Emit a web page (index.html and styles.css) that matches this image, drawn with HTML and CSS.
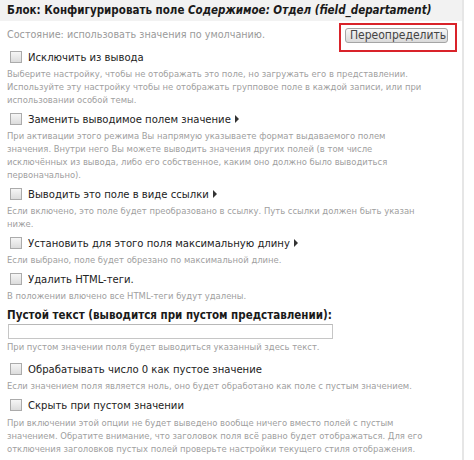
FILE: index.html
```html
<!DOCTYPE html>
<html lang="ru">
<head>
<meta charset="utf-8">
<link rel="stylesheet" href="styles.css">
</head>
<body>
<div class="panel">
  <div class="title">Блок: Конфигурировать поле <em>Содержимое: Отдел (field_departament)</em></div>
  <div class="status-row">
    <span class="status">Состояние: использовать значения по умолчанию.</span>
    <span class="override"><button class="btn">Переопределить</button></span>
  </div>

  <div class="item">
    <label class="label"><span class="cb"></span>Исключить из вывода</label>
    <div class="desc">Выберите настройку, чтобы не отображать это поле, но загружать его в представлении.<br>Используйте эту настройку чтобы не отображать групповое поле в каждой записи, или при<br>использовании особой темы.</div>
  </div>

  <div class="item">
    <label class="label"><span class="cb"></span>Заменить выводимое полем значение <span class="arrow"></span></label>
    <div class="desc">При активации этого режима Вы напрямую указываете формат выдаваемого полем<br>значения. Внутри него Вы можете выводить значения других полей (в том числе<br>исключённых из вывода, либо его собственное, каким оно должно было выводиться<br>первоначально).</div>
  </div>

  <div class="item">
    <label class="label"><span class="cb"></span>Выводить это поле в виде ссылки <span class="arrow"></span></label>
    <div class="desc">Если включено, это поле будет преобразовано в ссылку. Путь ссылки должен быть указан<br>ниже.</div>
  </div>

  <div class="item">
    <label class="label"><span class="cb"></span>Установить для этого поля максимальную длину <span class="arrow"></span></label>
    <div class="desc">Если выбрано, поле будет обрезано по максимальной длине.</div>
  </div>

  <div class="item">
    <label class="label"><span class="cb"></span>Удалить HTML-теги.</label>
    <div class="desc">В положении влючено все HTML-теги будут удалены.</div>
  </div>

  <div class="item item-text">
    <div class="field-title">Пустой текст (выводится при пустом представлении):</div>
    <div class="input"></div>
    <div class="desc">При пустом значении поля будет выводиться указанный здесь текст.</div>
  </div>

  <div class="item">
    <label class="label"><span class="cb"></span>Обрабатывать число 0 как пустое значение</label>
    <div class="desc">Если значением поля является ноль, оно будет обработано как поле с пустым значением.</div>
  </div>

  <div class="item">
    <label class="label"><span class="cb"></span>Скрыть при пустом значении</label>
    <div class="desc">При включении этой опции не будет выведено вообще ничего вместо полей с пустым<br>значением. Обратите внимание, что заголовок поля всё равно будет отображаться. Для его<br>отключения заголовков пустых полей проверьте настройки текущего стиля отображения.</div>
  </div>
</div>
</body>
</html>
```

FILE: styles.css
```css
html, body {
  margin: 0;
  padding: 0;
  background: #ffffff;
}
body {
  font-family: "DejaVu Sans Condensed", "DejaVu Sans", sans-serif;
  font-stretch: condensed;
  color: #333;
}
.panel {
  width: 462px;
  height: 460px;
  border-right: 2px solid #e6e6e6;
  overflow: hidden;
}
.title {
  background: #f2f2f2;
  font-weight: bold;
  font-size: 11.5px;
  color: #1a1a1a;
  height: 21px;
  line-height: 21px;
  padding-left: 7px;
  white-space: nowrap;
}
.status-row {
  display: flex;
  align-items: flex-start;
  justify-content: space-between;
  height: 20px;
  padding: 7px 14px 0 7px;
}
.status {
  font-size: 10.7px;
  line-height: 14px;
  color: #9a9a9a;
}
.override {
  position: relative;
  display: flex;
}
.override::after {
  content: "";
  position: absolute;
  left: -6px;
  right: -9px;
  top: -5px;
  bottom: -9px;
  border: 2px solid #d9232a;
  pointer-events: none;
}
.btn {
  font-family: "DejaVu Sans Condensed", "DejaVu Sans", sans-serif;
  font-stretch: condensed;
  font-size: 12px;
  color: #444;
  background: linear-gradient(#f8f8f8, #dadada);
  border: 1px solid #a5a5a5;
  border-radius: 3px;
  padding: 0 4px;
  margin: 0;
  width: 103px;
  height: 15px;
  line-height: 13px;
}
.item {
  padding: 0 4px 0 7px;
  margin-bottom: 4.5px;
}
.label {
  display: flex;
  align-items: center;
  font-size: 11.2px;
  color: #222;
  height: 18px;
}
.cb {
  width: 10px;
  height: 10px;
  border: 1px solid #ababab;
  background: linear-gradient(#f6f6f6, #dcdcdc);
  margin: 0 6px 0 3px;
  flex: none;
}
.arrow {
  display: inline-block;
  width: 0;
  height: 0;
  border-left: 4px solid #333;
  border-top: 4px solid transparent;
  border-bottom: 4px solid transparent;
  margin-left: 4px;
}
.desc {
  font-size: 9.4px;
  line-height: 13px;
  color: #a0a0a0;
  white-space: nowrap;
  margin-top: 0.5px;
}
.item-text {
  margin-bottom: 7px;
}
.field-title {
  font-weight: bold;
  font-size: 11.5px;
  color: #1a1a1a;
  height: 18px;
  line-height: 18px;
}
.input {
  width: 323px;
  height: 13px;
  border: 1px solid #c6c6c6;
  border-top-color: #b8b8b8;
  margin: 0 0 0 1px;
}
.item-text .desc {
  margin-top: 1px;
}
.item:last-child .desc {
  margin-top: 1.5px;
}
```
